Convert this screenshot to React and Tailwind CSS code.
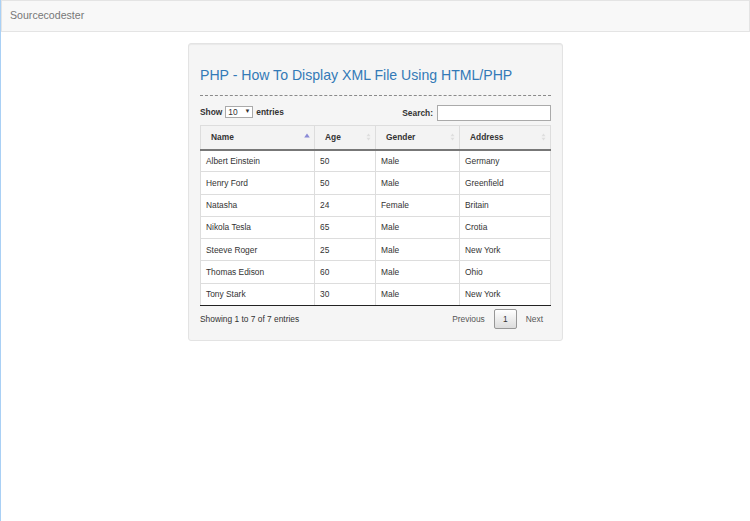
import React from "react";

const rows = [
  ["Albert Einstein", "50", "Male", "Germany"],
  ["Henry Ford", "50", "Male", "Greenfield"],
  ["Natasha", "24", "Female", "Britain"],
  ["Nikola Tesla", "65", "Male", "Crotia"],
  ["Steeve Roger", "25", "Male", "New York"],
  ["Thomas Edison", "60", "Male", "Ohio"],
  ["Tony Stark", "30", "Male", "New York"],
];

function SortBoth() {
  return (
    <svg width="5" height="8" viewBox="0 0 5 8" className="shrink-0">
      <path d="M2.5 0.5 L4.5 3.3 L0.5 3.3 Z" fill="#dedede" />
      <path d="M2.5 7.5 L4.5 4.7 L0.5 4.7 Z" fill="#dedede" />
    </svg>
  );
}

function SortAsc() {
  return (
    <svg width="6" height="8" viewBox="0 0 6 8" className="shrink-0">
      <path d="M3 0.5 L5.8 4.5 L0.2 4.5 Z" fill="#8a8ad6" />
    </svg>
  );
}

export default function App() {
  const headers = [
    ["Name", "w-[114px]", true],
    ["Age", "w-[61px]", false],
    ["Gender", "w-[84px]", false],
    ["Address", "w-[91px]", false],
  ];
  return (
    <div className="min-h-[521px] border-l border-[#a9d0f5] bg-white font-['Liberation_Sans',Arial,sans-serif] text-[#333]">
      <nav className="flex h-[32px] items-center border border-[#e4e4e4] bg-[#f8f8f8] pl-[8px] text-[10.6px] text-[#777]">
        Sourcecodester
      </nav>
      <div className="mt-[11px] flex justify-center">
        <div className="w-[375px] rounded-[3px] border border-[#e3e3e3] bg-[#f5f5f5] px-[11px] pb-[11px] pt-[11px] shadow-[inset_0_1px_1px_rgba(0,0,0,0.05)]">
          <h3 className="mt-[12px] text-[14.1px] leading-[16px] text-[#337ab7]">
            PHP - How To Display XML File Using HTML/PHP
          </h3>
          <hr className="mt-[12px] border-0 border-t border-dashed border-[#8a8a8a]" />
          <div className="mt-[9px] flex items-center justify-between text-[8.4px] font-bold">
            <div className="-mt-[2px] flex items-center gap-[3px]">
              <span>Show</span>
              <span className="flex h-[12px] w-[28px] items-center justify-between border border-[#aaa] bg-white px-[2px] text-[8.4px] font-normal">
                <span>10</span>
                <span className="text-[6px]">▼</span>
              </span>
              <span>entries</span>
            </div>
            <div className="flex items-center gap-[4px]">
              <span>Search:</span>
              <span className="block h-[16px] w-[114px] border border-[#aaa] bg-white" />
            </div>
          </div>
          <table className="mt-[4px] w-[350px] table-fixed border-collapse text-[8.4px]">
            <thead>
              <tr className="h-[24px] bg-[#f3f3f3]">
                {headers.map(([h, w, asc]) => (
                  <th
                    key={h}
                    className={`${w} border-x border-t border-[#dddddd] border-b-2 border-b-[#777] pl-[10px] pr-[4px] text-left font-bold`}
                  >
                    <div className="flex items-center justify-between">
                      <span>{h}</span>
                      {asc ? <SortAsc /> : <SortBoth />}
                    </div>
                  </th>
                ))}
              </tr>
            </thead>
            <tbody>
              {rows.map((r, i) => (
                <tr key={i} className="h-[22.3px] bg-white">
                  {r.map((c, j) => (
                    <td
                      key={j}
                      className={`border border-[#dddddd] px-[5px] ${i === rows.length - 1 ? "border-b-[#222]" : ""}`}
                    >
                      {c}
                    </td>
                  ))}
                </tr>
              ))}
            </tbody>
          </table>
          <div className="mt-[3px] flex items-center justify-between text-[8.4px]">
            <span>Showing 1 to 7 of 7 entries</span>
            <div className="flex items-center text-[#555]">
              <span className="mr-[9px]">Previous</span>
              <span className="flex h-[20px] w-[23px] items-center justify-center rounded-[2px] border border-[#979797] bg-gradient-to-b from-white to-[#dcdcdc] text-[#333]">
                1
              </span>
              <span className="ml-[9px] mr-[8px]">Next</span>
            </div>
          </div>
        </div>
      </div>
    </div>
  );
}
